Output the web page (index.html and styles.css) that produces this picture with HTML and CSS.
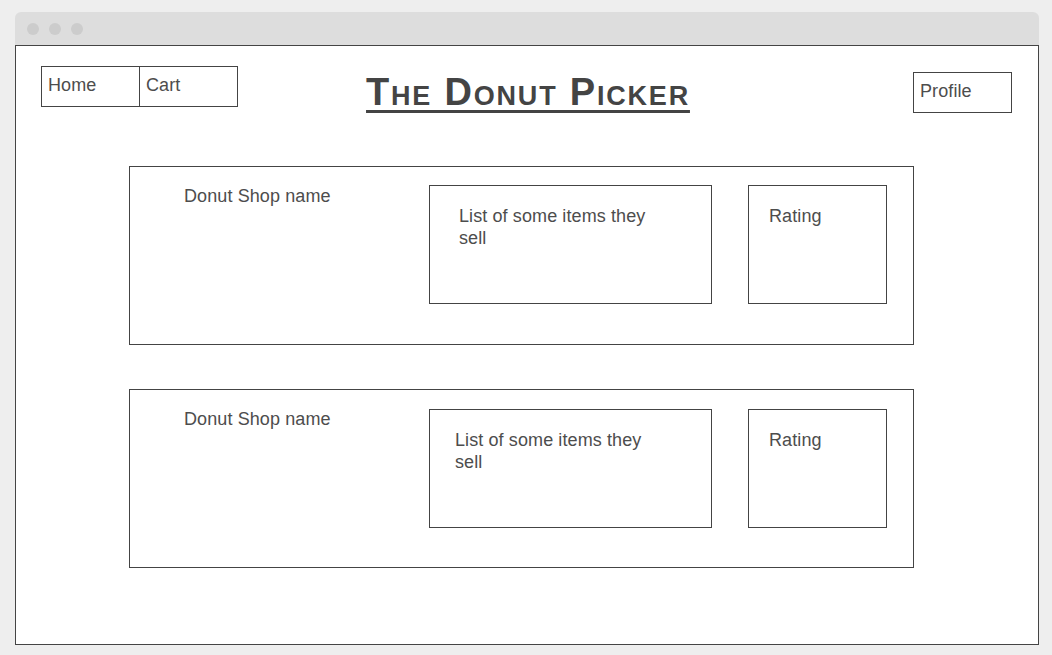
FILE: index.html
```html
<!DOCTYPE html>
<html>
<head>
<meta charset="utf-8">
<link rel="stylesheet" href="styles.css">
</head>
<body>
<div class="window">
  <div class="titlebar">
    <span class="dot"></span><span class="dot"></span><span class="dot"></span>
  </div>
  <div class="content">
    <header class="header">
      <nav class="nav">
        <a class="nav-item">Home</a>
        <a class="nav-item nav-item--joined">Cart</a>
      </nav>
      <h1 class="title">The Donut Picker</h1>
      <div class="profile-wrap">
        <a class="nav-item profile">Profile</a>
      </div>
    </header>
    <main class="cards">
      <section class="card">
        <div class="shop-name">Donut Shop name</div>
        <div class="box items"><p class="items-text">List of some items they sell</p></div>
        <div class="box rating">Rating</div>
      </section>
      <section class="card card--alt">
        <div class="shop-name">Donut Shop name</div>
        <div class="box items items--alt"><p class="items-text">List of some items they sell</p></div>
        <div class="box rating">Rating</div>
      </section>
    </main>
  </div>
</div>
</body>
</html>
```

FILE: styles.css
```css
* { box-sizing: border-box; }
html, body { margin: 0; padding: 0; }
body {
  background: #eeeeee;
  padding: 12px 13px 10px 15px;
  font-family: "Liberation Sans", Arial, sans-serif;
  color: #4d4d4d;
  font-size: 18px;
  line-height: 22px;
}
.window { width: 1024px; }
.titlebar {
  height: 33px;
  background: #dddddd;
  border-radius: 6px 6px 0 0;
  display: flex;
  align-items: center;
  gap: 10px;
  padding-left: 12px;
}
.dot {
  width: 12px;
  height: 12px;
  border-radius: 50%;
  background: #cccccc;
}
.content {
  height: 600px;
  background: #ffffff;
  border: 1px solid #444444;
  padding: 20px 26px 0 25px;
}
.header {
  display: grid;
  grid-template-columns: 1fr auto 1fr;
  align-items: start;
}
.nav { display: flex; }
.nav-item {
  display: flex;
  align-items: center;
  width: 99px;
  height: 41px;
  border: 1px solid #444444;
  padding: 0 0 3px 6px;
  color: #4d4d4d;
  text-decoration: none;
  letter-spacing: 0.1px;
}
.nav-item--joined { margin-left: -1px; }
.title {
  margin: 4px 0 0 0;
  padding-left: 3px;
  font-size: 38px;
  line-height: 44px;
  font-weight: bold;
  font-variant: small-caps;
  letter-spacing: 1.8px;
  color: #444444;
  text-decoration: underline;
  text-decoration-thickness: 3px;
  text-underline-offset: 5px;
}
.profile-wrap { display: flex; justify-content: flex-end; padding-top: 6px; }
.cards {
  margin-top: 52px;
  margin-left: 88px;
  display: flex;
  flex-direction: column;
  gap: 44px;
}
.card {
  width: 785px;
  height: 179px;
  border: 1px solid #444444;
  display: grid;
  grid-template-columns: 263px 283px 139px;
  column-gap: 36px;
  align-items: start;
  padding-top: 18px;
  letter-spacing: 0.1px;
}
.card--alt { padding-top: 19px; }
.card--alt .shop-name { margin-top: -1px; }
.shop-name { padding-left: 54px; }
.box {
  height: 119px;
  border: 1px solid #444444;
  padding-top: 19px;
}
.items { padding-left: 29px; }
.items--alt { padding-left: 25px; }
.items-text { margin: 0; width: 200px; }
.rating { padding-left: 20px; }
```
